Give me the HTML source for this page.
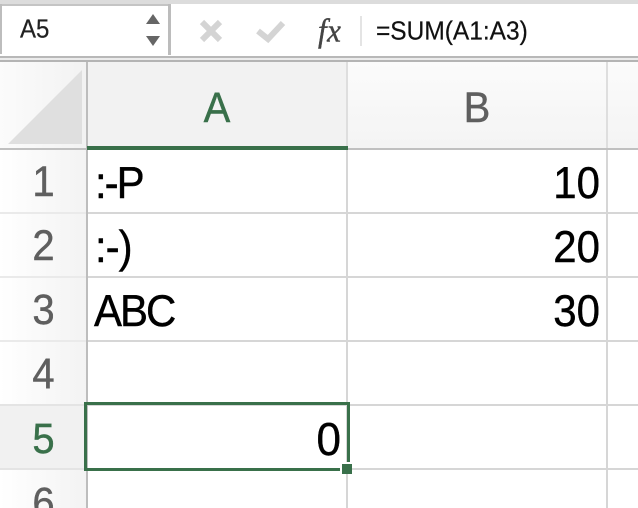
<!DOCTYPE html>
<html><head><meta charset="utf-8">
<style>
html,body{margin:0;padding:0;background:#fff}
#p{position:relative;width:638px;height:508px;overflow:hidden;background:#fff;font-family:"Liberation Sans",sans-serif}
#p div{position:absolute}
.t{white-space:nowrap;line-height:1;font-size:42px;color:#000;-webkit-text-stroke:.4px currentColor;transform:scaleY(1.06);transform-origin:0 50%}
.r{text-align:right}
.h{color:#5f5f5f;font-size:40px;text-align:center;width:87px;left:0;line-height:1}
</style></head><body><div id="p">
<!-- toolbar -->
<div style="left:0;top:0;width:638px;height:4px;background:#dcdcdc"></div>
<div style="left:0;top:4px;width:168px;height:2px;background:#c4c4c4"></div>
<div style="left:0;top:4px;width:2px;height:50px;background:#bdbdbd"></div>
<div style="left:168px;top:4px;width:3px;height:51px;background:#bcbcbc"></div>
<div style="left:0;top:56px;width:638px;height:2px;background:#b8b8b8"></div>
<div style="left:0;top:58px;width:638px;height:2px;background:#ececec"></div>
<div style="left:0;top:60px;width:638px;height:2px;background:#b4b4b4"></div>
<div class="t" style="left:20px;top:18px;font-size:24px;color:#222;-webkit-text-stroke:.2px #222">A5</div>
<svg style="position:absolute;left:0;top:0" width="638" height="60">
<path d="M153 14L160 24H146Z" fill="#666"/><path d="M146 36H160L153 46Z" fill="#666"/>
<path d="M202 22L220 40M220 22L202 40" stroke="#d4d4d4" stroke-width="6" fill="none"/>
<path d="M258 31L268 39L283 23" stroke="#d4d4d4" stroke-width="6" fill="none"/>
<rect x="360" y="16" width="2" height="30" fill="#e4e4e4"/>
</svg>
<div class="t" style="left:318px;top:15px;font-family:'Liberation Serif',serif;font-style:italic;font-size:31px;color:#444;letter-spacing:.5px">fx</div>
<div class="t" style="left:376px;top:20px;font-size:24.5px;letter-spacing:0;color:#111;-webkit-text-stroke:.2px #111">=SUM(A1:A3)</div>
<!-- headers -->
<div style="left:0;top:62px;width:87px;height:86px;background:linear-gradient(90deg,#fbfbfb,#f2f2f2)"></div>
<div style="left:87px;top:62px;width:260px;height:86px;background:#f2f2f2"></div>
<div style="left:347px;top:62px;width:291px;height:86px;background:linear-gradient(#fbfbfb,#f4f4f4)"></div>
<svg style="position:absolute;left:0;top:62px" width="87" height="86"><path d="M8 82L82 8V82Z" fill="#dfdfdf"/></svg>
<div style="left:0;top:148px;width:87px;height:360px;background:linear-gradient(90deg,#fff,#f3f3f3)"></div>
<div style="left:0;top:405px;width:86px;height:64px;background:#f1f1f1"></div>
<!-- grid lines -->
<div style="left:0;top:148px;width:638px;height:2px;background:#c0c0c0"></div>
<div style="left:86px;top:62px;width:2px;height:446px;background:#bdbdbd"></div>
<div style="left:346px;top:62px;width:2px;height:86px;background:#dedede"></div>
<div style="left:606px;top:62px;width:2px;height:86px;background:#dedede"></div>
<div style="left:346px;top:150px;width:2px;height:358px;background:#d6d6d6"></div>
<div style="left:606px;top:150px;width:2px;height:358px;background:#d6d6d6"></div>
<div style="left:88px;top:212px;width:550px;height:2px;background:#d6d6d6"></div>
<div style="left:88px;top:276px;width:550px;height:2px;background:#d6d6d6"></div>
<div style="left:88px;top:340px;width:550px;height:2px;background:#d6d6d6"></div>
<div style="left:88px;top:404px;width:550px;height:2px;background:#d6d6d6"></div>
<div style="left:88px;top:468px;width:550px;height:2px;background:#d6d6d6"></div>
<div style="left:0;top:212px;width:86px;height:2px;background:#eaeaea"></div>
<div style="left:0;top:276px;width:86px;height:2px;background:#eaeaea"></div>
<div style="left:0;top:340px;width:86px;height:2px;background:#eaeaea"></div>
<div style="left:0;top:404px;width:86px;height:2px;background:#e4e4e4"></div>
<div style="left:0;top:468px;width:86px;height:2px;background:#e4e4e4"></div>
<div style="left:87px;top:146px;width:261px;height:4px;background:#39704a"></div>
<!-- header labels -->
<div class="t" style="left:87px;width:260px;text-align:center;top:88px;font-size:40px;color:#39704a">A</div>
<div class="t" style="left:347px;width:260px;text-align:center;top:88px;font-size:40px;color:#5f5f5f">B</div>
<div class="t h" style="top:162px">1</div>
<div class="t h" style="top:226px">2</div>
<div class="t h" style="top:290px">3</div>
<div class="t h" style="top:354px">4</div>
<div class="t h" style="top:419px;color:#39704a">5</div>
<div class="t h" style="top:483px">6</div>
<!-- cells -->
<div class="t" style="left:95px;top:162px;letter-spacing:-2px">:-P</div>
<div class="t" style="left:95px;top:226px;letter-spacing:-1px">:-)</div>
<div class="t" style="left:94px;top:290px;letter-spacing:-2px">ABC</div>
<div class="t r" style="right:38px;top:162px">10</div>
<div class="t r" style="right:38px;top:226px">20</div>
<div class="t r" style="right:38px;top:290px">30</div>
<!-- selection -->
<div style="left:84px;top:402px;width:266px;height:3px;background:#39704a"></div>
<div style="left:84px;top:468px;width:256px;height:3px;background:#39704a"></div>
<div style="left:84px;top:402px;width:3px;height:69px;background:#39704a"></div>
<div style="left:347px;top:402px;width:3px;height:60px;background:#39704a"></div>
<div style="left:340px;top:462px;width:12px;height:12px;background:#fff"></div>
<div style="left:342px;top:464px;width:10px;height:10px;background:#39704a"></div>
<div class="t r" style="right:297px;top:418px;font-size:44px">0</div>
</div></body></html>
